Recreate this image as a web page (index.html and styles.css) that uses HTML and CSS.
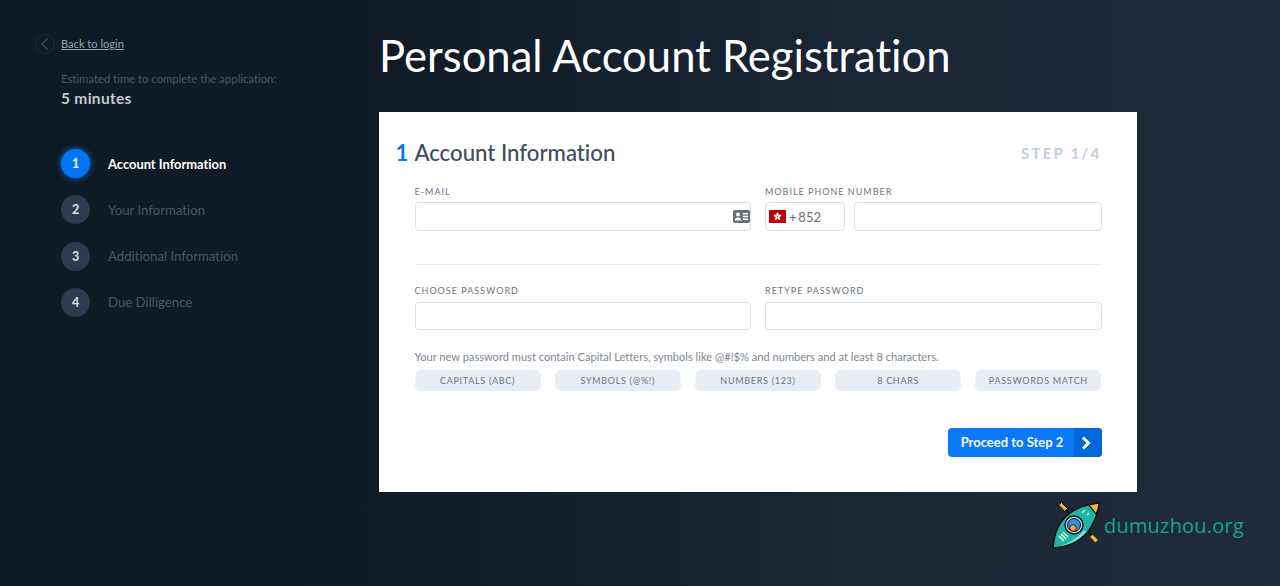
FILE: index.html
```html
<!DOCTYPE html>
<html lang="en">
<head>
  <meta charset="UTF-8">
  <meta name="viewport" content="width=device-width, initial-scale=1">
  <title>Personal Account Registration</title>
  <link rel="stylesheet" href="styles.css">
</head>
<body>
  <div class="page">
    <aside class="sidebar">
      <div class="back">
        <span class="back-icon">
          <svg width="12" height="14" viewBox="0 0 12 14"><path d="M8.500 1.500 3 7l5.500 5.500" fill="none" stroke="#3a4656" stroke-width="1.600"/></svg>
        </span>
        <a href="#" class="back-link">Back to login</a>
      </div>
      <div class="estimate">
        <p class="estimate-label">Estimated time to complete the application:</p>
        <p class="estimate-value">5 minutes</p>
      </div>
      <ul class="steps">
        <li class="step active"><span class="step-num">1</span>Account Information</li>
        <li class="step"><span class="step-num">2</span>Your Information</li>
        <li class="step"><span class="step-num">3</span>Additional Information</li>
        <li class="step"><span class="step-num">4</span>Due Dilligence</li>
      </ul>
    </aside>

    <main class="content">
      <h1>Personal Account Registration</h1>
      <div class="card">
        <div class="card-head">
          <h2><span class="card-num">1</span>Account Information</h2>
          <span class="card-step">STEP 1/4</span>
        </div>

        <div class="form-row">
          <div class="field">
            <label>E-MAIL</label>
            <div class="input has-icon">
              <svg width="17" height="13" viewBox="0 0 17 13"><rect width="17" height="13" rx="2" fill="#6b6f73"/><circle cx="5" cy="4.600" r="2" fill="#fff"/><path d="M1.800 10.600c0-2.200 1.400-3.200 3.200-3.200s3.200 1 3.200 3.200z" fill="#fff"/><path d="M9.800 3h5.200v1.400H9.800zM9.800 5.800h5.200v1.400H9.800zM9.800 8.600h5.200V10H9.800z" fill="#fff"/></svg>
            </div>
          </div>
          <div class="field">
            <label>MOBILE PHONE NUMBER</label>
            <div class="phone">
              <div class="input phone-code">
                <svg width="17" height="13" viewBox="0 0 17 13"><rect width="17" height="13" fill="#ba0000"/><g fill="#fff"><ellipse cx="8.500" cy="4.300" rx="1.100" ry="1.800"/><ellipse cx="8.500" cy="4.300" rx="1.100" ry="1.800" transform="rotate(72 8.500 6.500)"/><ellipse cx="8.500" cy="4.300" rx="1.100" ry="1.800" transform="rotate(144 8.500 6.500)"/><ellipse cx="8.500" cy="4.300" rx="1.100" ry="1.800" transform="rotate(216 8.500 6.500)"/><ellipse cx="8.500" cy="4.300" rx="1.100" ry="1.800" transform="rotate(288 8.500 6.500)"/></g></svg>
                <span>+ 852</span>
              </div>
              <div class="input"></div>
            </div>
          </div>
        </div>

        <hr class="divider">

        <div class="form-row second">
          <div class="field">
            <label>CHOOSE PASSWORD</label>
            <div class="input"></div>
          </div>
          <div class="field">
            <label>RETYPE PASSWORD</label>
            <div class="input"></div>
          </div>
        </div>

        <p class="hint">Your new password must contain Capital Letters, symbols like @#!$% and numbers and at least 8 characters.</p>
        <div class="chips">
          <span class="chip">CAPITALS (ABC)</span>
          <span class="chip">SYMBOLS (@%!)</span>
          <span class="chip">NUMBERS (123)</span>
          <span class="chip">8 CHARS</span>
          <span class="chip">PASSWORDS MATCH</span>
        </div>

        <div class="actions">
          <button class="proceed">
            <span class="proceed-text">Proceed to Step 2</span>
            <span class="proceed-arrow">
              <svg width="10" height="14" viewBox="0 0 10 14"><path d="M2 1.500 7.500 7 2 12.500" fill="none" stroke="#fff" stroke-width="3"/></svg>
            </span>
          </button>
        </div>
      </div>
    </main>
  </div>

  <div class="watermark">
    <svg width="50" height="50" viewBox="0 0 50 50">
      <path d="M9 4l36 36" stroke="#111" stroke-width="1.500"/>
      <path d="M7.500 5l3-2.500 6 6-2.500 3z" fill="#f5b342" stroke="#111"/>
      <path d="M38.500 37l3-3 6 6-3 3z" fill="#f5b342" stroke="#111"/>
      <path d="M2 48C3 32 9 20 19 13 27 7 37 4 48 3 47 14 43 24 36 33 28 42 17 47 2 48z" fill="#1fb5a6" stroke="#111" stroke-width="1.600"/>
      <path d="M38 5l10-2c0 4-1 7-3 11z" fill="#f5b342" stroke="#111" stroke-width="1.200"/>
      <path d="M33 30c-6 8-14 13-24 16 9-1 19-6 26-14z" fill="#8fe0d4"/>
      <circle cx="23" cy="25" r="9" fill="#cfd8dc" stroke="#111" stroke-width="1.400"/>
      <circle cx="23" cy="25" r="6.500" fill="#2f8fd8" stroke="#111"/>
      <circle cx="22" cy="28" r="3.300" fill="#f5a93b" stroke="#111" stroke-width=".8"/>
      <path d="M8 36l5 5M10 34l5 5M12 32l5 5" stroke="#fff" stroke-width="1.300"/>
      <path d="M31 13l3-3M36 15l2-2" stroke="#fff" stroke-width="1.300"/>
    </svg>
    <span>dumuzhou.org</span>
  </div>
</body>
</html>
```

FILE: styles.css
```css
* {
  box-sizing: border-box;
}
html, body {
  height: 100%;
}
body {
  margin: 0;
  font-family: Lato, "Open Sans", sans-serif;
  font-variant-ligatures: none;
  background: linear-gradient(90deg, #0e1a24 0%, #101b26 30%, #1b2637 70%, #202b3d 100%);
  overflow: hidden;
}
.page {
  display: flex;
  height: 586px;
}

/* left column */
.sidebar {
  width: 379px;
  padding: 34px 0 0 35px;
}
.back {
  display: flex;
  align-items: center;
  gap: 6px;
}
.back-icon {
  width: 20px;
  height: 20px;
  border: 1px solid #1f2b39;
  border-radius: 50%;
  display: flex;
  align-items: center;
  justify-content: center;
}
.back-link {
  color: #9aa3ad;
  font-size: 11.100px;
  line-height: 20px;
  text-decoration: underline;
}
.estimate {
  margin: 18px 0 0 26px;
}
.estimate-label {
  margin: 0;
  color: #4b5765;
  font-size: 11.300px;
  line-height: 14px;
}
.estimate-value {
  margin: 1px 0 0;
  color: #c4cad0;
  font-size: 15.500px;
  font-weight: 700;
  line-height: 22px;
  letter-spacing: .3px;
}
.steps {
  list-style: none;
  margin: 40px 0 0 26px;
  padding: 0;
}
.step {
  display: flex;
  align-items: center;
  gap: 18px;
  height: 29px;
  margin-bottom: 17.300px;
  color: #4b5765;
  font-size: 13.200px;
}
.step-num {
  width: 29px;
  height: 29px;
  border-radius: 50%;
  background: #2d3a4f;
  color: #dfe3e8;
  font-size: 12.500px;
  font-weight: 700;
  display: flex;
  align-items: center;
  justify-content: center;
}
.step.active {
  color: #fff;
  font-size: 12.900px;
  font-weight: 700;
}
.step.active .step-num {
  background: #0074f5;
  color: #fff;
  box-shadow: 0 0 6px #0a6fe0;
}

/* main column */
.content {
  flex: 1;
}
h1 {
  margin: 28px 0 0;
  color: #fff;
  font-size: 43.600px;
  font-weight: 400;
  line-height: 54px;
}
.card {
  width: 758px;
  height: 380px;
  margin-top: 30px;
  padding: 0 35.500px 0 35.500px;
  background: #fff;
  position: relative;
}
.card-head {
  display: flex;
  align-items: center;
  justify-content: space-between;
  height: 41px;
  position: relative;
  top: 20px;
}
h2 {
  margin: 0 0 0 -19px;
  color: #414c5e;
  font-size: 22.200px;
  font-weight: 500;
}
.card-num {
  color: #0a75e8;
  font-weight: 700;
  margin-right: 6px;
}
.card-step {
  color: #c8d0da;
  font-size: 15px;
  font-weight: 900;
  letter-spacing: 2.200px;
}
.form-row {
  display: grid;
  grid-template-columns: 1fr 1fr;
  gap: 14px;
  margin-top: 0;
}
.card-head + .form-row {
  margin-top: 33px;
}
.field label {
  display: block;
  color: #6a7480;
  font-size: 9px;
  letter-spacing: 1px;
  line-height: 12px;
  margin-bottom: 4px;
}
.input {
  height: 29px;
  border: 1px solid #dcdfe3;
  border-radius: 4px;
  background: #fff;
}
.second label {
  margin-bottom: 5px;
}
.second .input {
  height: 28px;
}
.has-icon {
  display: flex;
  align-items: center;
  justify-content: flex-end;
  padding-right: 0;
}
.phone {
  display: grid;
  grid-template-columns: 80px 1fr;
  gap: 9px;
}
.phone-code {
  display: flex;
  align-items: center;
  gap: 3px;
  padding-left: 3px;
  color: #6b6f73;
  font-size: 13px;
  word-spacing: -1.500px;
}
.divider {
  border: 0;
  border-top: 1px solid #e8eaed;
  margin: 33px 0 20px;
}
.hint {
  margin: 20px 0 0;
  color: #7d8794;
  font-size: 11.100px;
  line-height: 14px;
}
.chips {
  display: grid;
  grid-template-columns: repeat(5, 1fr);
  gap: 14px;
  margin-top: 6px;
}
.chip {
  height: 21px;
  border-radius: 6px;
  background: #e9eef4;
  color: #677282;
  font-size: 9px;
  letter-spacing: .7px;
  line-height: 21px;
  text-align: center;
}
.actions {
  display: flex;
  justify-content: flex-end;
  margin-top: 37px;
}
.proceed {
  display: flex;
  align-items: stretch;
  height: 29px;
  width: 154px;
  padding: 0;
  border: 0;
  border-radius: 4px;
  overflow: hidden;
  background: #0a78fb;
  color: #f3f8ff;
  font-family: inherit;
  font-size: 13px;
  font-weight: 700;
}
.proceed-text {
  flex: 1;
  padding-left: 3px;
  line-height: 29px;
  text-align: center;
}
.proceed-arrow {
  width: 28px;
  padding-right: 3px;
  background: #0068da;
  display: flex;
  align-items: center;
  justify-content: center;
}

/* sits over the page corner */
.watermark {
  position: absolute;
  left: 1051px;
  top: 500px;
  display: flex;
  align-items: center;
  gap: 3px;
}
.watermark span {
  color: #13a594;
  font-family: "Open Sans", sans-serif;
  font-size: 20px;
  letter-spacing: .2px;
}
```
